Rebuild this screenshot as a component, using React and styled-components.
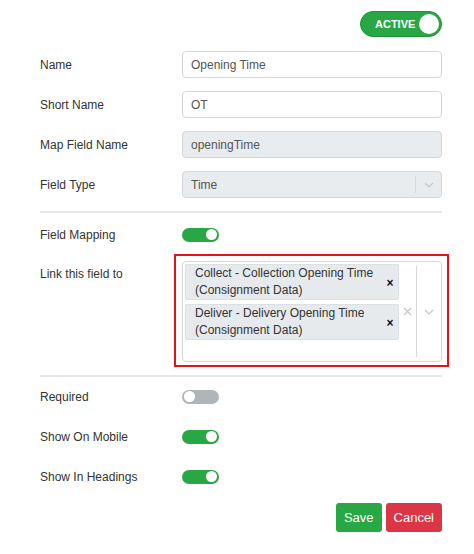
import React from 'react'
import styled, { createGlobalStyle } from 'styled-components'

const GlobalStyle = createGlobalStyle`
  body {
    margin: 0;
    background: #fff;
    font-family: "Liberation Sans", Arial, sans-serif;
  }
`

const Chevron = () => (
  <svg width="10" height="6" viewBox="0 0 10 6">
    <path d="M1 1 L5 5 L9 1" fill="none" stroke="#c8c8c8" strokeWidth="1.2" />
  </svg>
)

const Cross = () => (
  <svg width="9" height="9" viewBox="0 0 9 9">
    <path d="M1 1 L8 8 M8 1 L1 8" fill="none" stroke="#c8c8c8" strokeWidth="1.4" />
  </svg>
)

const App = () => {
  const fields = [
    { label: 'Name', value: 'Opening Time' },
    { label: 'Short Name', value: 'OT' },
    { label: 'Map Field Name', value: 'openingTime', disabled: true },
  ]

  const tags = [
    'Collect - Collection Opening Time (Consignment Data)',
    'Deliver - Delivery Opening Time (Consignment Data)',
  ]

  const switches = [
    { label: 'Required', on: false },
    { label: 'Show On Mobile', on: true },
    { label: 'Show In Headings', on: true },
  ]

  return (
    <>
      <GlobalStyle />
      <Page>
        <TopBar>
          <ActivePill>
            <span>ACTIVE</span>
            <Knob />
          </ActivePill>
        </TopBar>

        {fields.map(f => (
          <FieldRow key={f.label}>
            <Label>{f.label}</Label>
            <Input $disabled={f.disabled}>{f.value}</Input>
          </FieldRow>
        ))}
        <FieldRow>
          <Label>Field Type</Label>
          <Input $disabled>
            <SelectValue>Time</SelectValue>
            <Separator />
            <Indicator $w={25}><Chevron /></Indicator>
          </Input>
        </FieldRow>

        <Divider $after={8} />

        <FieldRow>
          <Label>Field Mapping</Label>
          <Toggle $on />
        </FieldRow>

        <FieldRow $top>
          <Label $pad>Link this field to</Label>
          <Highlight>
            <MultiSelect>
              <TagList>
                {tags.map(t => (
                  <Tag key={t}>
                    <TagText>{t}</TagText>
                    <TagRemove>×</TagRemove>
                  </Tag>
                ))}
              </TagList>
              <Indicator $w={17}><Cross /></Indicator>
              <Separator />
              <Indicator $w={25}><Chevron /></Indicator>
            </MultiSelect>
          </Highlight>
        </FieldRow>

        <Divider $after={6} />

        {switches.map(s => (
          <FieldRow key={s.label}>
            <Label>{s.label}</Label>
            <Toggle $on={s.on} />
          </FieldRow>
        ))}

        <Actions>
          <Button $color="#28a745">Save</Button>
          <Button $color="#dc3545">Cancel</Button>
        </Actions>
      </Page>
    </>
  )
}

const Page = styled.div`
  width: 474px;
  box-sizing: border-box;
  padding: 11px 32px 0 40px;
`

const TopBar = styled.div`
  display: flex;
  justify-content: flex-end;
  margin-bottom: 14px;
`

const ActivePill = styled.div`
  display: flex;
  align-items: center;
  justify-content: space-between;
  box-sizing: border-box;
  width: 82px;
  height: 26px;
  padding: 0 2px 0 14px;
  border-radius: 13px;
  background: #28a745;
  border: 1px solid #1f9139;
  color: #fff;
  font-weight: bold;
  font-size: 11px;
`

const Knob = styled.div`
  width: 20px;
  height: 20px;
  border-radius: 50%;
  background: #fff;
`

const FieldRow = styled.div`
  display: grid;
  grid-template-columns: 142px 260px;
  align-items: ${p => (p.$top ? 'start' : 'center')};
  min-height: 27px;
  margin-bottom: 13px;
`

const Label = styled.div`
  font-size: 12px;
  color: #333;
  padding-top: ${p => (p.$pad ? '6px' : '1px')};
`

const Input = styled.div`
  display: flex;
  align-items: center;
  box-sizing: border-box;
  height: 27px;
  padding-left: 8px;
  border: 1px solid #d3d7db;
  border-radius: 4px;
  background: ${p => (p.$disabled ? '#e9ecef' : '#fff')};
  font-size: 12px;
  color: #555;
`

const SelectValue = styled.div`
  flex: 1;
`

const Separator = styled.div`
  align-self: stretch;
  width: 1px;
  margin: 4px 0;
  background: #d6d9dc;
`

const Indicator = styled.div`
  display: flex;
  align-items: center;
  justify-content: center;
  width: ${p => p.$w}px;
  align-self: center;
`

const Divider = styled.div`
  height: 2px;
  background: #e6e6e6;
  margin: 0 0 ${p => p.$after}px;
`

const Toggle = styled.div`
  position: relative;
  width: 37px;
  height: 14px;
  border-radius: 7px;
  background: ${p => (p.$on ? '#28a745' : '#b0b5ba')};

  &::after {
    content: '';
    position: absolute;
    top: 1.5px;
    left: ${p => (p.$on ? '24px' : '2px')};
    width: 11px;
    height: 11px;
    border-radius: 50%;
    background: #fff;
  }
`

const Highlight = styled.div`
  position: relative;

  &::after {
    content: '';
    position: absolute;
    top: -7px;
    left: -8px;
    right: -7px;
    bottom: -5px;
    border: 2px solid #e3131b;
    pointer-events: none;
  }
`

const MultiSelect = styled.div`
  display: flex;
  box-sizing: border-box;
  height: 101px;
  border: 1px solid #d3d7db;
  border-radius: 4px;
  background: #fff;
`

const TagList = styled.div`
  flex: 1;
  display: flex;
  flex-direction: column;
  align-items: flex-start;
  gap: 4px;
  padding: 2px 0 0 2px;
`

const Tag = styled.div`
  display: flex;
  align-items: center;
  box-sizing: border-box;
  width: 214px;
  padding-left: 9px;
  background: #e7eaed;
  border: 1px solid #dde0e3;
  border-radius: 2px;
`

const TagText = styled.div`
  flex: 1;
  font-size: 12px;
  line-height: 17px;
  color: #333;
`

const TagRemove = styled.div`
  width: 16px;
  text-align: center;
  font-size: 12px;
  font-weight: bold;
  color: #111;
  padding-top: 2px;
`

const Actions = styled.div`
  display: flex;
  justify-content: flex-end;
  gap: 4px;
`

const Button = styled.button`
  height: 29px;
  padding: 0 8px;
  border: none;
  border-radius: 3px;
  background: ${p => p.$color};
  color: #fff;
  font-family: "Liberation Sans", Arial, sans-serif;
  font-size: 13px;
`

export default App
